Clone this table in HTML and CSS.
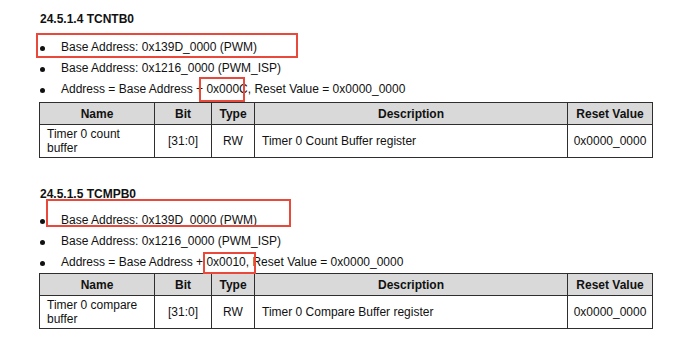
FILE: index.html
```html
<!DOCTYPE html>
<html>
<head>
<meta charset="utf-8">
<link rel="stylesheet" href="styles.css">
</head>
<body>
<div class="page">
  <section class="reg">
    <h3 class="reg-title">24.5.1.4 TCNTB0</h3>
    <ul class="addr">
      <li>Base Address: 0x139D_0000 (PWM)</li>
      <li>Base Address: 0x1216_0000 (PWM_ISP)</li>
      <li>Address = Base Address + 0x000C, Reset Value = 0x0000_0000</li>
    </ul>
    <table class="regtable">
      <colgroup>
        <col class="c-name"><col class="c-bit"><col class="c-type"><col class="c-desc"><col class="c-reset">
      </colgroup>
      <thead>
        <tr><th>Name</th><th>Bit</th><th>Type</th><th>Description</th><th>Reset Value</th></tr>
      </thead>
      <tbody>
        <tr>
          <td class="t-name">Timer 0 count<br>buffer</td>
          <td class="t-mid">[31:0]</td>
          <td class="t-mid">RW</td>
          <td class="t-desc">Timer 0 Count Buffer register</td>
          <td class="t-mid">0x0000_0000</td>
        </tr>
      </tbody>
    </table>
  </section>

  <section class="reg reg-second">
    <h3 class="reg-title">24.5.1.5 TCMPB0</h3>
    <ul class="addr">
      <li>Base Address: 0x139D_0000 (PWM)</li>
      <li>Base Address: 0x1216_0000 (PWM_ISP)</li>
      <li>Address = Base Address + 0x0010, Reset Value = 0x0000_0000</li>
    </ul>
    <table class="regtable">
      <colgroup>
        <col class="c-name"><col class="c-bit"><col class="c-type"><col class="c-desc"><col class="c-reset">
      </colgroup>
      <thead>
        <tr><th>Name</th><th>Bit</th><th>Type</th><th>Description</th><th>Reset Value</th></tr>
      </thead>
      <tbody>
        <tr>
          <td class="t-name">Timer 0 compare<br>buffer</td>
          <td class="t-mid">[31:0]</td>
          <td class="t-mid">RW</td>
          <td class="t-desc">Timer 0 Compare Buffer register</td>
          <td class="t-mid">0x0000_0000</td>
        </tr>
      </tbody>
    </table>
  </section>

  <span class="mark mark-a"></span>
  <span class="mark mark-b"></span>
  <span class="mark mark-c"></span>
  <span class="mark mark-d"></span>
</div>
</body>
</html>
```

FILE: styles.css
```css
* { box-sizing: border-box; }

html, body {
  margin: 0;
  padding: 0;
  background: #ffffff;
}

body {
  font-family: "Liberation Sans", Arial, sans-serif;
  font-size: 12px;
  color: #111111;
}

.page {
  position: relative;
  width: 692px;
  height: 337px;
  padding: 12px 0 0 39px;
  overflow: hidden;
}

.reg-title {
  margin: 0 0 11px 1px;
  font-size: 12px;
  line-height: 14px;
  font-weight: bold;
  color: #111111;
}

.reg-second {
  margin-top: 29px;
}

.reg-second .reg-title {
  margin-bottom: 9px;
}

.addr {
  list-style: none;
  margin: 0 0 2px 0;
  padding: 0;
}

.reg-second .addr {
  margin-bottom: 0;
}

.addr li {
  display: flex;
  align-items: center;
  height: 21px;
  line-height: 21px;
  padding-left: 22px;
  position: relative;
  white-space: nowrap;
}

.addr li::before {
  content: "";
  position: absolute;
  left: 1px;
  top: 9px;
  width: 5px;
  height: 5px;
  border-radius: 50%;
  background: #111111;
}

.regtable {
  border-collapse: collapse;
  table-layout: fixed;
  width: 613px;
  font-size: 12px;
  color: #111111;
}

.c-name { width: 115px; }
.c-bit { width: 57px; }
.c-type { width: 43px; }
.c-desc { width: 313px; }
.c-reset { width: 85px; }

.regtable th,
.regtable td {
  border: 1px solid #2e2e2e;
  padding: 0;
}

.regtable th {
  background: #d9d9d9;
  font-weight: bold;
  height: 22px;
  line-height: 14px;
  text-align: center;
}

.regtable td {
  height: 33px;
  line-height: 14px;
  vertical-align: middle;
}

.t-name {
  padding-left: 7px !important;
  text-align: left;
}

.t-mid {
  text-align: center;
}

.t-desc {
  padding-left: 7px !important;
  text-align: left;
}

.mark {
  position: absolute;
  border: 2px solid #e9493a;
  pointer-events: none;
}

.mark-a { left: 36px; top: 33px; width: 262px; height: 25px; }
.mark-b { left: 199px; top: 77px; width: 46px; height: 25px; }
.mark-c { left: 46px; top: 199px; width: 245px; height: 28px; }
.mark-d { left: 203px; top: 252px; width: 53px; height: 22px; }
```
